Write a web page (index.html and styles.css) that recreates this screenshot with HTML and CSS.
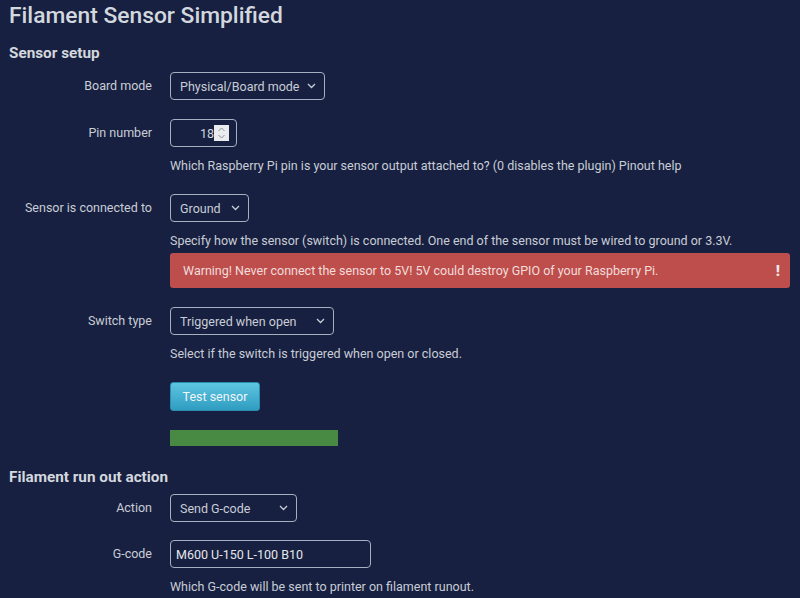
FILE: index.html
```html
<!DOCTYPE html>
<html>
<head>
<meta charset="utf-8">
<link rel="stylesheet" href="styles.css">
</head>
<body>
<div class="page">
  <h1 class="title">Filament Sensor Simplified</h1>
  <h2 class="section">Sensor setup</h2>

  <div class="group">
    <div class="label">Board mode</div>
    <div class="controls">
      <div class="select w-board"><span>Physical/Board mode</span><svg class="chev" width="9" height="6" viewBox="0 0 9 6"><path d="M1 1l3.5 3.5L8 1" fill="none" stroke="#c9cdd6" stroke-width="1.3"/></svg></div>
    </div>
  </div>

  <div class="group">
    <div class="label">Pin number</div>
    <div class="controls">
      <div class="input w-pin"><span class="num">18</span><span class="spin"><svg width="11" height="14" viewBox="0 0 11 14"><path d="M2.5 5l3-3 3 3M2.5 9l3 3 3-3" fill="none" stroke="#8a8f99" stroke-width="1"/></svg></span></div>
      <p class="help">Which Raspberry Pi pin is your sensor output attached to? (0 disables the plugin) Pinout help</p>
    </div>
  </div>

  <div class="group">
    <div class="label">Sensor is connected to</div>
    <div class="controls">
      <div class="select w-ground"><span>Ground</span><svg class="chev" width="9" height="6" viewBox="0 0 9 6"><path d="M1 1l3.5 3.5L8 1" fill="none" stroke="#c9cdd6" stroke-width="1.3"/></svg></div>
      <p class="help">Specify how the sensor (switch) is connected. One end of the sensor must be wired to ground or 3.3V.</p>
      <div class="alert"><span>Warning! Never connect the sensor to 5V! 5V could destroy GPIO of your Raspberry Pi.</span><span class="bang">!</span></div>
    </div>
  </div>

  <div class="group">
    <div class="label">Switch type</div>
    <div class="controls">
      <div class="select w-switch"><span>Triggered when open</span><svg class="chev" width="9" height="6" viewBox="0 0 9 6"><path d="M1 1l3.5 3.5L8 1" fill="none" stroke="#c9cdd6" stroke-width="1.3"/></svg></div>
      <p class="help">Select if the switch is triggered when open or closed.</p>
    </div>
  </div>

  <div class="group">
    <div class="label"></div>
    <div class="controls">
      <button class="btn">Test sensor</button>
      <div class="status"></div>
    </div>
  </div>

  <h2 class="section section2">Filament run out action</h2>

  <div class="group group-first2">
    <div class="label">Action</div>
    <div class="controls">
      <div class="select w-action"><span>Send G-code</span><svg class="chev" width="9" height="6" viewBox="0 0 9 6"><path d="M1 1l3.5 3.5L8 1" fill="none" stroke="#c9cdd6" stroke-width="1.3"/></svg></div>
    </div>
  </div>

  <div class="group">
    <div class="label">G-code</div>
    <div class="controls">
      <div class="input w-gcode"><span class="gtext">M600 U-150 L-100 B10</span></div>
      <p class="help">Which G-code will be sent to printer on filament runout.</p>
    </div>
  </div>
</div>
</body>
</html>
```

FILE: styles.css
```css
html, body {
  margin: 0;
  padding: 0;
  background: #172040;
  height: 100%;
  overflow: hidden;
}
body {
  font-family: Roboto, "Liberation Sans", sans-serif;
  font-size: 12.5px;
  color: #c9cdd6;
}
.page {
  padding: 0 9px;
}
.title {
  margin: 0;
  font-size: 22.8px;
  line-height: 32px;
  font-weight: 500;
  color: #d3d7de;
}
.section {
  margin: 11px 0 0;
  font-size: 15.3px;
  line-height: 20px;
  font-weight: 700;
  color: #d3d7de;
}
.section2 {
  margin-top: 21px;
}
.group {
  display: grid;
  grid-template-columns: 143px 1fr;
  column-gap: 18px;
  margin-top: 9px;
  margin-bottom: 19px;
}
.group-first2 {
  margin-top: 7px;
  margin-bottom: 18px;
}
.label {
  text-align: right;
  line-height: 28px;
  color: #c9cdd6;
}
.controls {
  display: flex;
  flex-direction: column;
  align-items: flex-start;
}
.select, .input {
  box-sizing: border-box;
  height: 28px;
  border: 1px solid #a8afbf;
  border-radius: 4px;
  display: flex;
  align-items: center;
  justify-content: space-between;
  padding: 0 8px 0 9px;
  color: #c9cdd6;
}
.chev {
  flex: none;
}
.w-board { width: 155px; }
.w-ground { width: 79px; }
.w-switch { width: 164px; }
.w-action { width: 127px; }
.w-pin {
  width: 67px;
  justify-content: flex-end;
  padding: 0 7px 0 0;
}
.num {
  color: #d3d7de;
}
.spin {
  width: 15px;
  height: 16px;
  background: #e9ebef;
  display: flex;
  align-items: center;
  justify-content: center;
}
.w-gcode {
  width: 201px;
  justify-content: flex-start;
  padding-left: 5px;
}
.gtext {
  color: #e4e7ec;
}
.help {
  margin: 10px 0 0;
  line-height: 18px;
  color: #c9cdd6;
}
.alert {
  box-sizing: border-box;
  margin-top: 3px;
  width: 620px;
  height: 35px;
  background: #be4e4b;
  border-radius: 3px;
  color: #f1dcdc;
  display: flex;
  align-items: center;
  justify-content: space-between;
  padding: 0 10px 0 13px;
}
.bang {
  font-weight: 900;
  font-size: 15px;
  color: #f6eaea;
}
.btn {
  box-sizing: border-box;
  width: 90px;
  height: 29px;
  border: 1px solid #2a8cae;
  border-radius: 3px;
  background: linear-gradient(#5ec5e1, #2f9cc0);
  color: #f1f6f9;
  font-family: Roboto, "Liberation Sans", sans-serif;
  font-size: 12.5px;
  padding: 0;
}
.status {
  margin-top: 19px;
  width: 168px;
  height: 16px;
  background: #488944;
}
```
